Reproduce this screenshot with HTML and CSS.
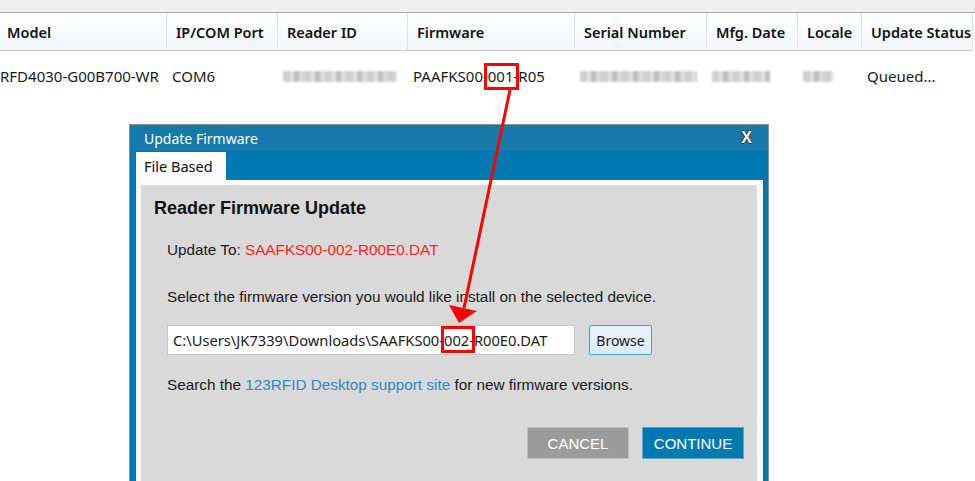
FILE: index.html
```html
<!DOCTYPE html>
<html>
<head>
<meta charset="utf-8">
<link rel="stylesheet" href="styles.css">
</head>
<body>
<div class="topbar"></div>
<div class="grid">
  <div class="hcell c-model">Model</div>
  <div class="hcell">IP/COM Port</div>
  <div class="hcell">Reader ID</div>
  <div class="hcell">Firmware</div>
  <div class="hcell">Serial Number</div>
  <div class="hcell">Mfg. Date</div>
  <div class="hcell">Locale</div>
  <div class="hcell">Update Status</div>

  <div class="cell c-model-v">RFD4030-G00B700-WR</div>
  <div class="cell">COM6</div>
  <div class="cell"><span class="blur w114"></span></div>
  <div class="cell">PAAFKS00-001-R05</div>
  <div class="cell"><span class="blur w117"></span></div>
  <div class="cell"><span class="blur w58"></span></div>
  <div class="cell"><span class="blur w30"></span></div>
  <div class="cell">Queued...</div>
</div>

<div class="dialog">
  <div class="titlebar">
    <span class="title">Update Firmware</span>
    <span class="close">X</span>
  </div>
  <div class="tabs">
    <div class="tab">File Based</div>
  </div>
  <div class="panel">
    <div class="inner">
      <h2 class="heading">Reader Firmware Update</h2>
      <p class="line update-to">Update To: <span class="red">SAAFKS00-002-R00E0.DAT</span></p>
      <p class="line select">Select the firmware version you would like install on the selected device.</p>
      <div class="file-row">
        <div class="input">C:\Users\JK7339\Downloads\SAAFKS00-002-R00E0.DAT</div>
        <button class="browse">Browse</button>
      </div>
      <p class="line search">Search the <span class="link">123RFID Desktop support site</span> for new firmware versions.</p>
      <div class="actions">
        <button class="btn cancel">CANCEL</button>
        <button class="btn continue">CONTINUE</button>
      </div>
    </div>
  </div>
</div>

<svg class="annot" width="975" height="481" viewBox="0 0 975 481">
  <rect x="485.5" y="64.5" width="32" height="24" fill="none" stroke="#ff0000" stroke-width="3"/>
  <rect x="442.5" y="327.5" width="31" height="24" fill="none" stroke="#ff0000" stroke-width="3"/>
  <line x1="510" y1="90" x2="464" y2="308" stroke="#ff0000" stroke-width="3"/>
  <polygon points="449,305 477,311 459,323" fill="#ff0000"/>
</svg>
</body>
</html>
```

FILE: styles.css
```css
html, body {
  margin: 0;
  padding: 0;
  background: #ffffff;
  width: 975px;
  height: 481px;
  overflow: hidden;
  position: relative;
  font-family: "Noto Sans", "Open Sans", sans-serif;
  color: #1a1a1a;
}

.topbar {
  height: 12px;
  background: #f0f0f0;
  border-bottom: 1px solid #a9a9a9;
}

.grid {
  display: grid;
  grid-template-columns: 167px 111px 130px 167px 132px 91px 64px 111px;
  width: 973px;
}

.hcell {
  height: 38px;
  display: flex;
  align-items: center;
  padding-left: 9px;
  font-size: 14.5px;
  font-weight: 600;
  color: #111;
  background: linear-gradient(#fdfeff, #f3f7fb);
  border-right: 1px solid #dfe3e8;
  border-bottom: 1px solid #c8c8c8;
  white-space: nowrap;
  box-sizing: border-box;
}
.hcell.c-model { padding-left: 7px; }

.cell {
  height: 50px;
  display: flex;
  align-items: center;
  padding-left: 5px;
  font-size: 15px;
  color: #1a1a1a;
  white-space: nowrap;
  overflow: hidden;
}
.cell.c-model-v { padding-left: 0; }

.blur {
  display: inline-block;
  height: 11px;
  background: repeating-linear-gradient(90deg, #cfcfcf 0 7px, #e2e2e2 7px 11px, #bdbdbd 11px 16px, #dadada 16px 21px);
  filter: blur(1.2px);
}
.w114 { width: 114px; }
.w117 { width: 117px; }
.w58 { width: 58px; }
.w30 { width: 30px; }

.dialog {
  position: absolute;
  left: 129px;
  top: 124px;
  width: 638px;
  height: 370px;
  border: 1px solid #8f8f8f;
  background: #0079b0;
  display: flex;
  flex-direction: column;
}

.titlebar {
  height: 26px;
  background: #1779ab;
  display: flex;
  align-items: center;
  justify-content: space-between;
  padding: 0 16px 0 14px;
}
.title {
  color: #ffffff;
  font-size: 14px;
}
.close {
  font-family: "Liberation Sans", Arial, sans-serif;
  font-weight: bold;
  font-size: 16px;
  color: #ffffff;
  text-shadow: -1px 0 #333, 1px 0 #333, 0 -1px #333, 0 1px #333;
}

.tabs {
  display: flex;
  padding: 1px 0 0 6px;
}
.tab {
  width: 90px;
  height: 28px;
  background: #fafafa;
  font-size: 14.5px;
  display: flex;
  align-items: center;
  padding-left: 8px;
  box-sizing: border-box;
  color: #111;
}

.panel {
  flex: 1;
  margin: 0 5px 0 6px;
  background: #fbfbfb;
  padding: 5px 6px 0 5px;
  display: flex;
}
.inner {
  flex: 1;
  background: #d9d9d9;
  padding: 13px 13px 0 13px;
  font-family: "Liberation Sans", Arial, sans-serif;
  display: flex;
  flex-direction: column;
}

.heading {
  margin: 0;
  font-size: 18px;
  line-height: 20px;
  font-weight: bold;
  color: #111;
}
.line {
  margin: 0;
  font-size: 15.3px;
  line-height: 20px;
  color: #1a1a1a;
  padding-left: 13px;
}
.update-to { margin-top: 22px; }
.select { margin-top: 27px; }
.red { color: #ff1f1f; }
.link { color: #2b8bc6; }

.file-row {
  margin-top: 18px;
  padding-left: 13px;
  display: flex;
  gap: 14px;
}
.input {
  width: 408px;
  height: 30px;
  box-sizing: border-box;
  background: #ffffff;
  border: 1px solid #c6c6c6;
  display: flex;
  align-items: center;
  padding-left: 5px;
  font-family: "Noto Sans", "Open Sans", sans-serif;
  font-size: 14.7px;
  color: #1a1a1a;
  white-space: nowrap;
}
.browse {
  width: 63px;
  height: 30px;
  border: 1px solid #3fa6db;
  border-radius: 2px;
  box-shadow: inset 0 0 0 1px #d8eefa;
  background: linear-gradient(#eaf4fb, #dcecf8);
  font-family: "Noto Sans", "Open Sans", sans-serif;
  font-size: 14px;
  color: #1a1a1a;
  padding: 0;
}

.search { margin-top: 20px; }

.actions {
  margin-top: 32px;
  display: flex;
  justify-content: flex-end;
  gap: 13px;
}
.btn {
  width: 102px;
  height: 32px;
  border: 1px solid rgba(255,255,255,0.35);
  color: #ffffff;
  font-family: "Liberation Sans", Arial, sans-serif;
  font-size: 15px;
  padding: 0;
}
.cancel { background: #9b9b9b; }
.continue { background: #0079b0; }

.annot {
  position: absolute;
  left: 0;
  top: 0;
  pointer-events: none;
}
```
